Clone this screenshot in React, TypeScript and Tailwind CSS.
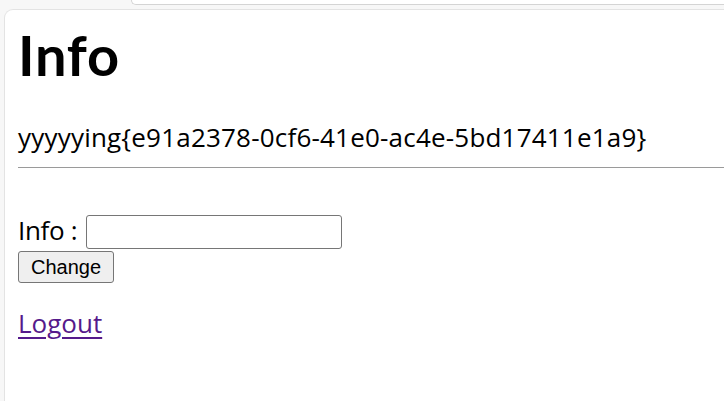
import React from 'react';

const App: React.FC = () => {
  return (
    <div className="w-[724px] h-[401px] overflow-hidden bg-[#f7f7f7] flex flex-col">
      {/* browser chrome edge */}
      <div className="ml-[131px] h-[5px] shrink-0 bg-white border-b border-l border-[#d4d4d4] rounded-bl-[10px]" />

      <div className="ml-[4px] mt-[4px] flex-1 bg-white border-t border-l border-[#e3e3e3] rounded-tl-[9px] pl-[13px] font-['Open_Sans',sans-serif] text-black">
        <h1 className="mt-[13px] text-[56px] leading-[64px] font-bold font-['Lato',sans-serif] tracking-[0.8px]">
          Info
        </h1>

        <div className="mt-[33px] text-[26px] leading-[34px] tracking-[0.2px]">
          yyyyying{'{'}e91a2378-0cf6-41e0-ac4e-5bd17411e1a9{'}'}
        </div>

        <hr className="mt-[13px] border-0 border-t border-[#9a9a9a]" />

        <form className="mt-[46px]" onSubmit={(e) => e.preventDefault()}>
          <div className="flex items-end">
            <span className="text-[26px] leading-[32px] mr-[9px] mb-[3px] tracking-[-0.3px]">Info :</span>
            <input
              type="text"
              className="w-[256px] h-[34px] border border-[#767676] rounded-[3px] bg-white px-[3px]"
            />
          </div>
          <button
            type="submit"
            className="mt-[2px] w-[96px] h-[32px] bg-[#efefef] border border-[#767676] rounded-[3px] text-[20px] leading-[24px] font-['Liberation_Sans',sans-serif] text-black"
          >
            Change
          </button>
        </form>

        <div className="mt-[23px]">
          <a href="#" className="text-[26px] leading-[34px] text-[#551a8b] underline underline-offset-[4px]">
            Logout
          </a>
        </div>
      </div>
    </div>
  );
};

export default App;
